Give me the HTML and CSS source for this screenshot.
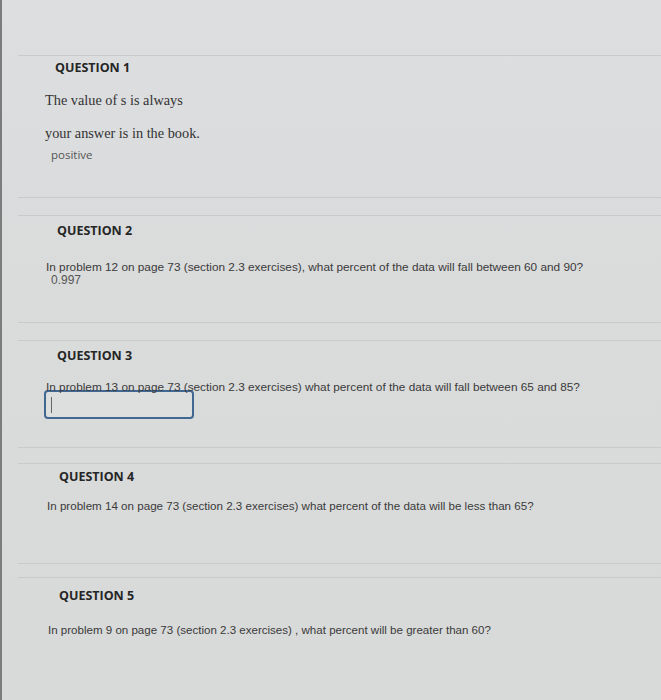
FILE: index.html
```html
<!DOCTYPE html>
<html>
<head>
<meta charset="utf-8">
<link rel="stylesheet" href="styles.css">
</head>
<body>
<div class="page">
  <section class="question q1">
    <div class="title">QUESTION 1</div>
    <p class="serif first">The value of s is always</p>
    <p class="serif second">your answer is in the book.</p>
    <div class="answer answer-q1">positive</div>
  </section>
  <section class="question q2">
    <div class="title">QUESTION 2</div>
    <p class="prompt">In problem 12 on page 73 (section 2.3 exercises), what percent of the data will fall between 60 and 90?</p>
    <div class="answer answer-q2">0.997</div>
  </section>
  <section class="question q3">
    <div class="title">QUESTION 3</div>
    <p class="prompt">In problem 13 on page 73 (section 2.3 exercises) what percent of the data will fall between 65 and 85?</p>
    <div class="input"><span class="caret"></span></div>
  </section>
  <section class="question q4">
    <div class="title">QUESTION 4</div>
    <p class="prompt">In problem 14 on page 73 (section 2.3 exercises) what percent of the data will be less than 65?</p>
  </section>
  <section class="question q5">
    <div class="title">QUESTION 5</div>
    <p class="prompt">In problem 9 on page 73 (section 2.3 exercises) , what percent will be greater than 60?</p>
  </section>
</div>
</body>
</html>
```
FILE: styles.css
```css
html, body {
  margin: 0;
  padding: 0;
}
body {
  width: 661px;
  height: 700px;
  overflow: hidden;
  background: linear-gradient(180deg, #dcdee0 0%, #dadbdb 40%, #d8d9d9 100%);
  border-left: 2px solid #7c7c7c;
  box-sizing: border-box;
  font-family: "Liberation Sans", Arial, sans-serif;
  color: #3a3a3a;
}
.page {
  padding-top: 55px;
  padding-left: 16px;
}
.question {
  border-top: 1px solid #c9cacb;
  border-bottom: 1px solid #c9cacb;
  margin-bottom: 17px;
}
.title {
  font-family: "Open Sans", sans-serif;
  font-weight: 700;
  font-size: 12.5px;
  line-height: 16px;
  color: #262626;
  margin-left: 39px;
}
p {
  margin: 0;
}
.serif {
  font-family: "Liberation Serif", "Times New Roman", serif;
  font-size: 14.3px;
  line-height: 18px;
  color: #333;
  margin-left: 27px;
}
.serif.first { margin-top: 15px; }
.serif.second { margin-top: 15px; }
.answer {
  font-size: 12px;
  line-height: 13px;
  color: #555;
  margin-left: 33px;
}
.answer-q1 {
  font-family: "Open Sans", sans-serif;
  font-size: 11.5px;
  line-height: 16px;
  margin-top: 5px;
}
.prompt {
  font-size: 11.8px;
  line-height: 13px;
  color: #3a3a3a;
  margin-left: 28px;
}
.q1 { padding-top: 4px; padding-bottom: 34px; }
.q1 .title { margin-left: 37px; }
.q2 { padding-top: 7px; padding-bottom: 35px; }
.q2 .prompt { margin-top: 22px; }
.q3 { padding-top: 7px; padding-bottom: 28px; margin-bottom: 15px; }
.q3 .prompt { margin-top: 17px; }
.q4 { padding-top: 5px; padding-bottom: 51px; margin-bottom: 13px; }
.q4 .prompt { margin-top: 14px; margin-left: 29px; font-size: 11.6px; }
.q4 .title, .q5 .title { margin-left: 41px; }
.q5 { padding-top: 10px; padding-bottom: 40px; margin-bottom: 0; border-bottom: none; }
.q5 .prompt { margin-top: 20px; margin-left: 30px; font-size: 11.55px; }
.input {
  width: 141px;
  height: 25px;
  margin-top: -4px;
  margin-left: 26px;
  border: 2px solid #416793;
  border-radius: 4px;
  background: #dddede;
  display: flex;
  align-items: center;
  padding-left: 5px;
}
.caret {
  width: 1px;
  height: 16px;
  background: #666;
}
```
